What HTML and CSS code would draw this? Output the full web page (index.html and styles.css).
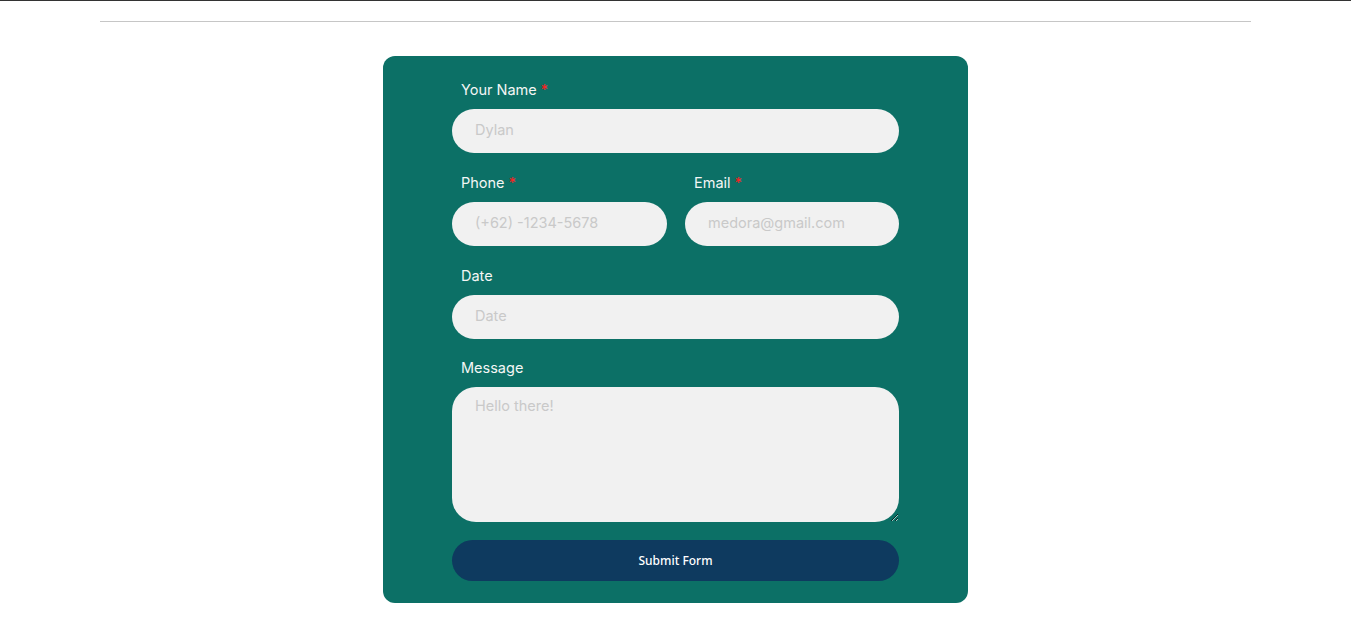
FILE: index.html
```html
<!DOCTYPE html>
<html lang="en">
<head>
<meta charset="utf-8">
<title>Contact Form</title>
<link rel="stylesheet" href="styles.css">
</head>
<body>
<div class="topbar"></div>
<div class="divider"></div>
<main class="wrap">
  <form class="card">
    <div class="field">
      <label class="label">Your Name <span class="req">*</span></label>
      <input class="input" type="text" placeholder="Dylan">
    </div>
    <div class="row">
      <div class="field">
        <label class="label">Phone <span class="req">*</span></label>
        <input class="input" type="text" placeholder="(+62) -1234-5678">
      </div>
      <div class="field">
        <label class="label">Email <span class="req">*</span></label>
        <input class="input" type="text" placeholder="medora@gmail.com">
      </div>
    </div>
    <div class="field">
      <label class="label">Date</label>
      <input class="input" type="text" placeholder="Date">
    </div>
    <div class="field field-message">
      <label class="label">Message</label>
      <textarea class="textarea" placeholder="Hello there!"></textarea>
    </div>
    <button class="submit" type="button">Submit Form</button>
  </form>
</main>
</body>
</html>
```
FILE: styles.css
```css
* { box-sizing: border-box; }
html, body { margin: 0; padding: 0; background: #fff; }
body { font-family: Inter, "Noto Sans", sans-serif; }
.topbar { height: 1px; background: #333; }
.divider { height: 1px; background: #c6c6c6; margin: 20px 100px 0; }
.wrap { display: flex; justify-content: center; padding-top: 34px; }
.card {
  width: 585px;
  background: #0c7066;
  border-radius: 12px;
  padding: 24px 69px 22px;
  display: flex;
  flex-direction: column;
  gap: 20px;
}
.row { display: grid; grid-template-columns: 215px 214px; column-gap: 18px; }
.field { display: flex; flex-direction: column; }
.field-message { margin-top: -1px; }
.label {
  color: #f4f6f5;
  font-size: 14.5px;
  line-height: 20px;
  margin: 0 0 9px 9px;
}
.req { color: #ff2020; }
.input, .textarea {
  display: block;
  width: 100%;
  border: none;
  outline: none;
  background: #f1f1f1;
  font-family: Inter, "Noto Sans", sans-serif;
  font-size: 14.5px;
  color: #333;
  padding: 0 23px;
}
.input { height: 44px; border-radius: 22px; padding-bottom: 3px; }
.textarea { height: 135px; border-radius: 24px; padding-top: 10px; resize: vertical; }
.input::placeholder, .textarea::placeholder { color: #c9c9c9; }
.submit {
  margin-top: -2px;
  height: 41px;
  border: none;
  border-radius: 21px;
  background: #0e3a5f;
  color: #fff;
  font-family: "Noto Sans", Lato, sans-serif;
  font-size: 12px;
  font-weight: 500;
  padding-bottom: 2px;
  cursor: pointer;
}
```
